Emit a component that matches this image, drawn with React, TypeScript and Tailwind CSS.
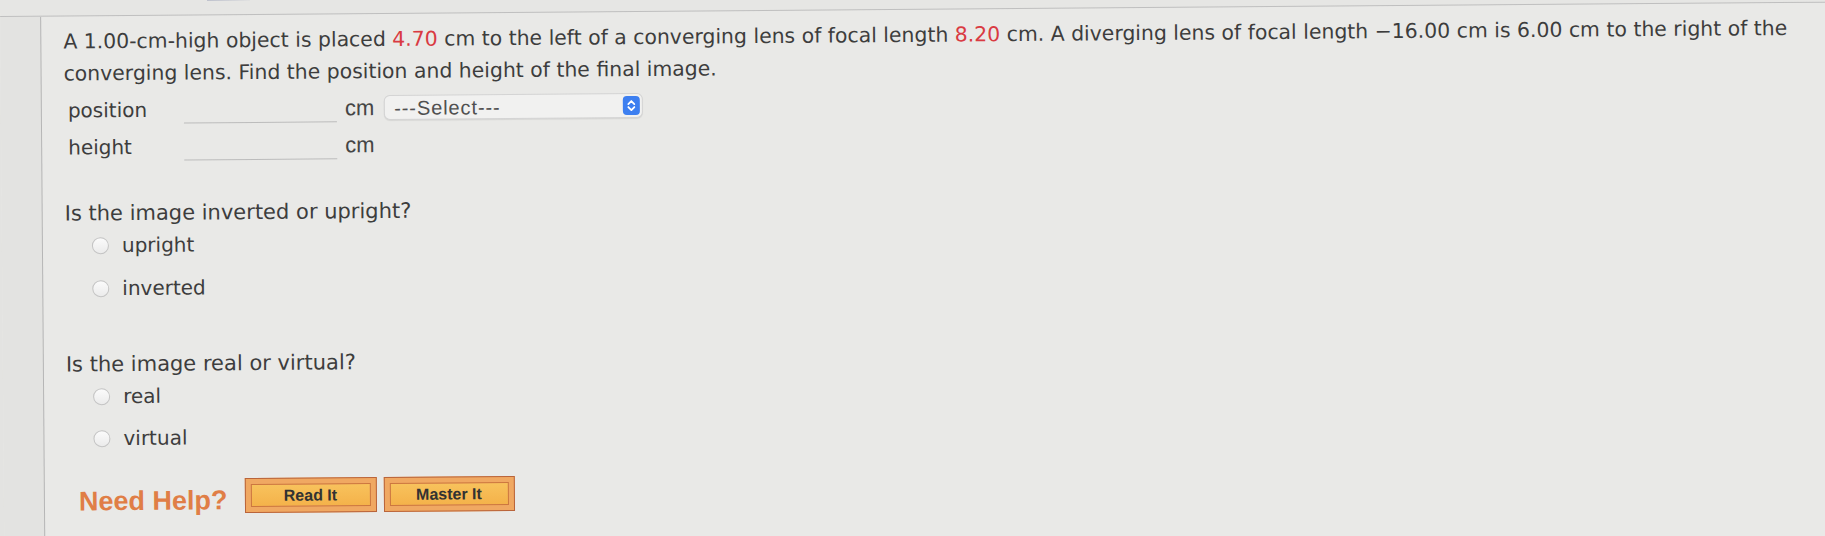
import React from 'react';

const Radio = ({ label, className = '' }: { label: string; className?: string }) => (
  <label className={`flex h-[32px] items-center ${className}`}>
    <span className="ml-[27px] h-[17px] w-[17px] shrink-0 rounded-full border border-[#c4c4c4] bg-gradient-to-b from-[#fbfbfb] to-[#ebebeb]" />
    <span className="ml-[13px] text-[20px] leading-[32px]">{label}</span>
  </label>
);

const HelpButton = ({ label, className = '' }: { label: string; className?: string }) => (
  <button className={`h-[35px] border border-[#b9643b] bg-[#f0a862] p-[5px] ${className}`}>
    <span className="flex h-full w-full items-center justify-center border border-[#cc773f] bg-gradient-to-b from-[#f8c25c] to-[#f4b24a] font-['Liberation_Sans',Arial,sans-serif] text-[16px] font-bold text-[#323232]">
      {label}
    </span>
  </button>
);

const Red = ({ children }: { children: React.ReactNode }) => (
  <span className="text-[#d93a42]">{children}</span>
);

export default function App() {
  return (
    <div className="h-screen w-full overflow-hidden bg-[#e3e3e1]">
      {/* the photographed screen sits a touch off level */}
      <div className="flex h-[560px] w-[1840px] origin-top-left -rotate-[0.45deg] flex-col bg-[#e9e9e7] font-['DejaVu_Sans',Verdana,sans-serif] text-[#3d3d3d]">
        {/* top strip */}
        <div className="relative h-[17px] shrink-0 border-b border-[#bfbfbf] bg-[#e6e6e4]">
          <div className="absolute left-[207px] top-0 h-[2px] w-[150px] bg-[#4b588a]" />
        </div>

        <div className="flex flex-1">
          <div className="w-[41px] shrink-0 border-r border-[#b6b6b6] bg-[#e3e3e1]" />

          <div className="flex-1 pl-[22px] pr-[35px] pt-[9px]">
            <p className="text-[20.4px] leading-[32px]">
              A 1.00-cm-high object is placed <Red>4.70</Red> cm to the left of a converging lens of focal length{' '}
              <Red>8.20</Red> cm. A diverging lens of focal length {'\u2212'}16.00 cm is 6.00 cm to the right of the
              converging lens. Find the position and height of the final image.
            </p>

            {/* answer rows */}
            <div className="mt-[2px] flex h-[37px] items-center">
              <span className="w-[120px] pl-[4px] text-[20px]">position</span>
              <div className="mb-[4px] h-[33px] w-[153px] border-b border-[#bcbcbc]" />
              <span className="ml-[8px] font-['Liberation_Sans',Arial,sans-serif] text-[22px] text-[#454545]">cm</span>
              <div className="ml-[10px] flex h-[25px] w-[259px] items-center justify-between rounded-[6px] border border-[#d4d4d4] bg-[#f1f1f0] pl-[9px] pr-[2px] shadow-[0_1px_1px_rgba(0,0,0,0.08)]">
                <span className="font-['Liberation_Sans',Arial,sans-serif] text-[20px] tracking-[0.9px] text-[#505050]">
                  ---Select---
                </span>
                <span className="flex h-[19px] w-[17px] items-center justify-center rounded-[4px] bg-[#3d7ff0]">
                  <svg width="9" height="13" viewBox="0 0 9 13" fill="none" stroke="white" strokeWidth="1.8" strokeLinecap="round" strokeLinejoin="round">
                    <path d="M1.5 5 L4.5 2 L7.5 5" />
                    <path d="M1.5 8 L4.5 11 L7.5 8" />
                  </svg>
                </span>
              </div>
            </div>
            <div className="flex h-[37px] items-center">
              <span className="w-[120px] pl-[4px] text-[20px]">height</span>
              <div className="mb-[4px] h-[33px] w-[153px] border-b border-[#bcbcbc]" />
              <span className="ml-[8px] font-['Liberation_Sans',Arial,sans-serif] text-[22px] text-[#454545]">cm</span>
            </div>

            {/* inverted or upright */}
            <p className="mt-[32px] text-[21px] leading-[32px]">Is the image inverted or upright?</p>
            <Radio label="upright" />
            <Radio label="inverted" className="mt-[11px]" />

            {/* real or virtual */}
            <p className="mt-[44px] text-[21px] leading-[32px]">Is the image real or virtual?</p>
            <Radio label="real" />
            <Radio label="virtual" className="mt-[10px]" />

            {/* help */}
            <div className="mt-[25px] flex items-start">
              <span className="ml-[12px] mt-[5px] font-['Liberation_Sans',Arial,sans-serif] text-[27px] font-bold leading-[35px] text-[#e07e46]">
                Need Help?
              </span>
              <HelpButton label="Read It" className="ml-[17px] w-[132px]" />
              <HelpButton label="Master It" className="ml-[7px] w-[131px]" />
            </div>
          </div>
        </div>
      </div>
    </div>
  );
}
